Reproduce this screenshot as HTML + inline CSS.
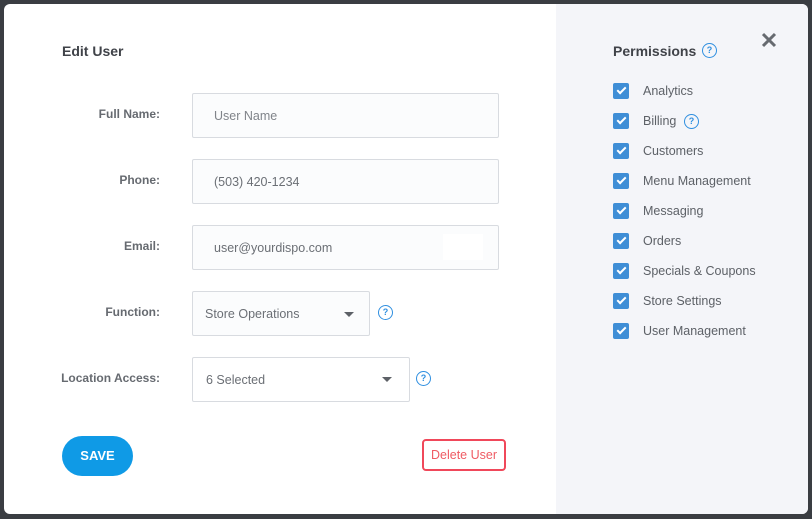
<!DOCTYPE html>
<html><head><style>
*{box-sizing:border-box;margin:0;padding:0}
body{width:812px;height:519px;background:#3a3d42;font-family:"Liberation Sans",sans-serif;position:relative;overflow:hidden}
.modal{position:absolute;left:4px;top:4px;width:804px;height:510px;background:#fff;border-radius:6px;overflow:hidden}
.right{position:absolute;left:552px;top:0;width:252px;height:510px;background:#f4f5f9}
.a{position:absolute}
.lbl{position:absolute;font-size:12px;font-weight:bold;color:#666a70;text-align:right;width:150px}
.inp{position:absolute;background:#fbfcfd;border:1px solid #d8dbe0;border-radius:2px;font-size:12.5px;color:#6b6f75;padding-left:21px;display:flex;align-items:center}
.q{position:absolute;width:15px;height:15px;border:1.5px solid #2f8fe0;border-radius:50%;color:#2f8fe0;font-size:9px;font-weight:bold;text-align:center;line-height:12px}
.cb{position:absolute;width:16px;height:16px;background:#3f8ed6;border-radius:2px}
.cb:after{content:"";position:absolute;left:4px;top:4px;width:7px;height:3px;border-left:2px solid #fff;border-bottom:2px solid #fff;transform:rotate(-45deg)}
.pl{position:absolute;font-size:12.5px;color:#5d6167}
.tri{position:absolute;width:0;height:0;border-left:5px solid transparent;border-right:5px solid transparent;border-top:5px solid #5d6167}
</style></head><body>
<div class="modal">
<div class="right"></div>
</div>
<div class="a" style="left:62px;top:43px;font-size:14px;font-weight:bold;color:#404349">Edit User</div>
<div class="lbl" style="left:10px;top:107px">Full Name:</div>
<div class="inp" style="left:192px;top:93px;width:307px;height:45px;color:#80848a">User Name</div>
<div class="lbl" style="left:10px;top:173px">Phone:</div>
<div class="inp" style="left:192px;top:159px;width:307px;height:45px">(503) 420-1234</div>
<div class="lbl" style="left:10px;top:239px">Email:</div>
<div class="inp" style="left:192px;top:225px;width:307px;height:45px">user@yourdispo.com</div>
<div class="a" style="left:443px;top:234px;width:40px;height:26px;background:#fff"></div>
<div class="lbl" style="left:10px;top:305px">Function:</div>
<div class="inp" style="left:192px;top:291px;width:178px;height:45px;padding-left:12px">Store Operations</div>
<div class="tri" style="left:344px;top:312px"></div>
<div class="q" style="left:378px;top:305px">?</div>
<div class="lbl" style="left:10px;top:371px">Location Access:</div>
<div class="inp" style="left:192px;top:357px;width:218px;height:45px;padding-left:13px;background:#fff">6 Selected</div>
<div class="tri" style="left:382px;top:377px"></div>
<div class="q" style="left:416px;top:371px">?</div>
<div class="a" style="left:62px;top:436px;width:71px;height:40px;border-radius:20px;background:#0f9ae6;color:#fff;font-weight:bold;font-size:13px;text-align:center;line-height:40px">SAVE</div>
<div class="a" style="left:422px;top:439px;width:84px;height:32px;border:2px solid #f0485a;border-radius:4px;color:#ef5b63;font-size:12.5px;text-align:center;line-height:28px">Delete User</div>
<div class="a" style="left:613px;top:43px;font-size:14px;font-weight:bold;color:#404349">Permissions</div>
<div class="q" style="left:702px;top:43px">?</div>
<svg class="a" style="left:761px;top:32px" width="16" height="16" viewBox="0 0 16 16"><path d="M2 2L14 14M14 2L2 14" stroke="#666a70" stroke-width="3"/></svg>
<div class="cb" style="left:613px;top:83px"></div><div class="pl" style="left:643px;top:84px">Analytics</div>
<div class="cb" style="left:613px;top:113px"></div><div class="pl" style="left:643px;top:114px">Billing</div><div class="q" style="left:684px;top:114px">?</div>
<div class="cb" style="left:613px;top:143px"></div><div class="pl" style="left:643px;top:144px">Customers</div>
<div class="cb" style="left:613px;top:173px"></div><div class="pl" style="left:643px;top:174px">Menu Management</div>
<div class="cb" style="left:613px;top:203px"></div><div class="pl" style="left:643px;top:204px">Messaging</div>
<div class="cb" style="left:613px;top:233px"></div><div class="pl" style="left:643px;top:234px">Orders</div>
<div class="cb" style="left:613px;top:263px"></div><div class="pl" style="left:643px;top:264px">Specials &amp; Coupons</div>
<div class="cb" style="left:613px;top:293px"></div><div class="pl" style="left:643px;top:294px">Store Settings</div>
<div class="cb" style="left:613px;top:323px"></div><div class="pl" style="left:643px;top:324px">User Management</div>
</body></html>
